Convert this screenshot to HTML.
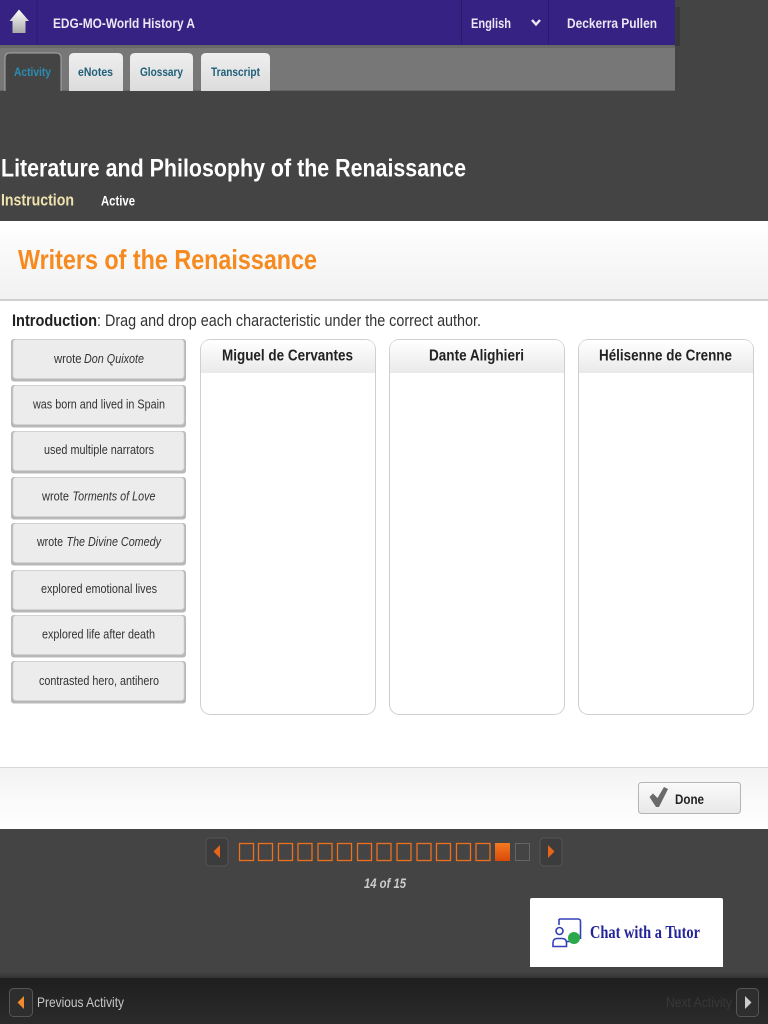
<!DOCTYPE html>
<html><head><meta charset="utf-8"><title>Writers of the Renaissance</title>
<style>
html,body{margin:0;padding:0;background:#444;width:768px;height:1024px;overflow:hidden}
svg{display:block;position:absolute;left:0;top:0;filter:blur(0.3px)}
text{font-family:"Liberation Sans",sans-serif}
.b{font-weight:700}
.i{font-style:italic}
.t{font-size:12.5px;fill:#333}
</style></head><body>
<svg width="768" height="1024" viewBox="0 0 768 1024" xmlns="http://www.w3.org/2000/svg">
<defs>
<linearGradient id="head" x1="0" y1="0" x2="0" y2="1"><stop offset="0" stop-color="#fff"/><stop offset="1" stop-color="#f1f1f1"/></linearGradient>
<linearGradient id="foot" x1="0" y1="0" x2="0" y2="1"><stop offset="0" stop-color="#f3f3f3"/><stop offset="1" stop-color="#fff"/></linearGradient>
<linearGradient id="col" x1="0" y1="0" x2="0" y2="1"><stop offset="0" stop-color="#fff"/><stop offset="1" stop-color="#e9e9e9"/></linearGradient>
<linearGradient id="tab" x1="0" y1="0" x2="0" y2="1"><stop offset="0" stop-color="#eee"/><stop offset="1" stop-color="#dcdcdc"/></linearGradient>
<linearGradient id="home" x1="0" y1="0" x2="0" y2="1"><stop offset="0" stop-color="#fff"/><stop offset="1" stop-color="#a9a9a9"/></linearGradient>
<linearGradient id="sq" x1="0" y1="0" x2="0" y2="1"><stop offset="0" stop-color="#f47a20"/><stop offset="1" stop-color="#d94a08"/></linearGradient>
<linearGradient id="done" x1="0" y1="0" x2="0" y2="1"><stop offset="0" stop-color="#fafafa"/><stop offset="1" stop-color="#e8e8e8"/></linearGradient>
<linearGradient id="bar" x1="0" y1="0" x2="0" y2="1"><stop offset="0" stop-color="#1f1f1f"/><stop offset="1" stop-color="#2b2b2b"/></linearGradient>
<linearGradient id="shade" x1="0" y1="0" x2="0" y2="1"><stop offset="0" stop-color="#444"/><stop offset="1" stop-color="#333"/></linearGradient>
</defs>

<rect width="768" height="1024" fill="#444"/>

<!-- top bar -->
<rect x="675" y="7" width="5" height="39" fill="#383838"/>
<rect x="0" y="45" width="675" height="46" fill="#777"/>
<rect x="0" y="45" width="675" height="3" fill="#686868"/>
<rect x="0" y="90" width="675" height="1" fill="#666"/>
<rect x="0" y="0" width="675" height="45" fill="#352283"/>
<rect x="36.500" y="0" width="1" height="45" fill="#2a1a6c"/>
<rect x="461" y="0" width="1" height="45" fill="#2a1a6c"/>
<rect x="548" y="0" width="1" height="45" fill="#2a1a6c"/>
<path d="M19 9.500 L29 21 H25.500 V33 H12.500 V21 H9.500 Z" fill="url(#home)"/>
<text x="53" y="28" class="b" font-size="13.500" fill="#ebe8f5" textLength="142" lengthAdjust="spacingAndGlyphs">EDG-MO-World History A</text>
<text x="471" y="28" class="b" font-size="13.500" fill="#ebe8f5" textLength="40" lengthAdjust="spacingAndGlyphs">English</text>
<path d="M532 20 L536 24.500 L540 20" fill="none" stroke="#ebe8f5" stroke-width="2.400"/>
<text x="567" y="28" class="b" font-size="13.500" fill="#ebe8f5" textLength="90" lengthAdjust="spacingAndGlyphs">Deckerra Pullen</text>

<!-- tabs -->
<path d="M5 91 V58 Q5 53 10 53 H56 Q61 53 61 58 V91 Z" fill="#444"/>
<path d="M5 91 V58 Q5 53 10 53 H56 Q61 53 61 58 V91" fill="none" stroke="#a8a8a8" stroke-width="1"/>
<path d="M69 91 V58 Q69 53 74 53 H118 Q123 53 123 58 V91 Z" fill="url(#tab)"/>
<path d="M130 91 V58 Q130 53 135 53 H188 Q193 53 193 58 V91 Z" fill="url(#tab)"/>
<path d="M201 91 V58 Q201 53 206 53 H265 Q270 53 270 58 V91 Z" fill="url(#tab)"/>
<rect x="5" y="91" width="56" height="1" fill="#444"/>
<text x="14" y="76" class="b" font-size="12" fill="#2b8db3" textLength="37" lengthAdjust="spacingAndGlyphs">Activity</text>
<text x="78" y="76" class="b" font-size="12" fill="#1f5f78" textLength="35" lengthAdjust="spacingAndGlyphs">eNotes</text>
<text x="140" y="76" class="b" font-size="12" fill="#1f5f78" textLength="43" lengthAdjust="spacingAndGlyphs">Glossary</text>
<text x="211" y="76" class="b" font-size="12" fill="#1f5f78" textLength="49" lengthAdjust="spacingAndGlyphs">Transcript</text>

<!-- titles -->
<text x="1" y="176.500" class="b" font-size="25" fill="#fff" textLength="465" lengthAdjust="spacingAndGlyphs">Literature and Philosophy of the Renaissance</text>
<text x="1" y="205.500" class="b" font-size="16.500" fill="#efe2ad" textLength="73" lengthAdjust="spacingAndGlyphs">Instruction</text>
<text x="101" y="205.500" class="b" font-size="13.500" fill="#fff" textLength="34" lengthAdjust="spacingAndGlyphs">Active</text>

<!-- content -->
<rect x="0" y="221" width="768" height="608" fill="#fff"/>
<rect x="0" y="221" width="768" height="78" fill="url(#head)"/>
<rect x="0" y="299" width="768" height="2" fill="#d0d0d0"/>
<text x="18" y="269" class="b" font-size="27.500" fill="#f68a1f" textLength="299" lengthAdjust="spacingAndGlyphs">Writers of the Renaissance</text>
<text x="12" y="326" class="b" font-size="16.500" fill="#222" textLength="85" lengthAdjust="spacingAndGlyphs">Introduction</text>
<text x="97" y="326" font-size="16.500" fill="#333" textLength="384" lengthAdjust="spacingAndGlyphs">: Drag and drop each characteristic under the correct author.</text>

<!-- tiles -->
<g fill="#b8b8b8">
<rect x="11" y="339" width="175" height="42.500" rx="3"/><rect x="11" y="385" width="175" height="42.500" rx="3"/>
<rect x="11" y="431" width="175" height="42.500" rx="3"/><rect x="11" y="477" width="175" height="42.500" rx="3"/>
<rect x="11" y="523" width="175" height="42.500" rx="3"/><rect x="11" y="570" width="175" height="42.500" rx="3"/>
<rect x="11" y="615" width="175" height="42.500" rx="3"/><rect x="11" y="661" width="175" height="42.500" rx="3"/>
</g>
<g fill="#ececec" stroke="#d2d2d2" stroke-width="0.800">
<rect x="13" y="339.500" width="171" height="39" rx="3"/><rect x="13" y="385.500" width="171" height="39" rx="3"/>
<rect x="13" y="431.500" width="171" height="39" rx="3"/><rect x="13" y="477.500" width="171" height="39" rx="3"/>
<rect x="13" y="523.500" width="171" height="39" rx="3"/><rect x="13" y="570.500" width="171" height="39" rx="3"/>
<rect x="13" y="615.500" width="171" height="39" rx="3"/><rect x="13" y="661.500" width="171" height="39" rx="3"/>
</g>
<text x="54" y="363" class="t" textLength="27.500" lengthAdjust="spacingAndGlyphs">wrote</text>
<text x="84" y="363" class="t i" textLength="60" lengthAdjust="spacingAndGlyphs">Don Quixote</text>
<text x="33" y="408.500" class="t" textLength="132" lengthAdjust="spacingAndGlyphs">was born and lived in Spain</text>
<text x="44" y="454" class="t" textLength="110" lengthAdjust="spacingAndGlyphs">used multiple narrators</text>
<text x="42" y="500.500" class="t" textLength="27" lengthAdjust="spacingAndGlyphs">wrote</text>
<text x="72.500" y="500.500" class="t i" textLength="83" lengthAdjust="spacingAndGlyphs">Torments of Love</text>
<text x="37" y="546" class="t" textLength="26" lengthAdjust="spacingAndGlyphs">wrote</text>
<text x="66.500" y="546" class="t i" textLength="94.500" lengthAdjust="spacingAndGlyphs">The Divine Comedy</text>
<text x="41" y="593" class="t" textLength="116" lengthAdjust="spacingAndGlyphs">explored emotional lives</text>
<text x="42" y="638.500" class="t" textLength="113" lengthAdjust="spacingAndGlyphs">explored life after death</text>
<text x="39" y="685" class="t" textLength="120" lengthAdjust="spacingAndGlyphs">contrasted hero, antihero</text>

<!-- columns -->
<rect x="200.500" y="339.500" width="175" height="375" rx="10" fill="#fff" stroke="#cfcfcf"/>
<path d="M201 373 V350 Q201 340 211 340 H365 Q375 340 375 350 V373 Z" fill="url(#col)"/>
<rect x="389.500" y="339.500" width="175" height="375" rx="10" fill="#fff" stroke="#cfcfcf"/>
<path d="M390 373 V350 Q390 340 400 340 H554 Q564 340 564 350 V373 Z" fill="url(#col)"/>
<rect x="578.500" y="339.500" width="175" height="375" rx="10" fill="#fff" stroke="#cfcfcf"/>
<path d="M579 373 V350 Q579 340 589 340 H743 Q753 340 753 350 V373 Z" fill="url(#col)"/>
<text x="222" y="360.500" class="b" font-size="15.500" fill="#222" textLength="131" lengthAdjust="spacingAndGlyphs">Miguel de Cervantes</text>
<text x="429" y="360.500" class="b" font-size="15.500" fill="#222" textLength="95" lengthAdjust="spacingAndGlyphs">Dante Alighieri</text>
<text x="599" y="360.500" class="b" font-size="15.500" fill="#222" textLength="133" lengthAdjust="spacingAndGlyphs">Hélisenne de Crenne</text>

<!-- footer of content -->
<rect x="0" y="767" width="768" height="62" fill="url(#foot)"/>
<rect x="0" y="767" width="768" height="1" fill="#d8d8d8"/>
<rect x="638.500" y="782.500" width="102" height="31" rx="3" fill="url(#done)" stroke="#b5b5b5"/>
<path d="M649.500 797 L653 793.500 L657.500 798 L664 787 L668 789 L659 807 L656 807 Z" fill="#6a6a6a"/>
<text x="675" y="804" class="b" font-size="14" fill="#222" textLength="29" lengthAdjust="spacingAndGlyphs">Done</text>

<!-- pager -->
<rect x="206" y="838" width="22" height="28" rx="4" fill="#3c3c3c" stroke="#555"/>
<path d="M220 845 V858 L213.500 851.500 Z" fill="#e8641a"/>
<rect x="540" y="838" width="22" height="28" rx="4" fill="#3c3c3c" stroke="#555"/>
<path d="M548 845 V858 L554.500 851.500 Z" fill="#e8641a"/>
<g fill="none" stroke="#ec701e" stroke-width="1.300">
<rect x="239.500" y="843.500" width="14" height="17"/><rect x="258.500" y="843.500" width="14" height="17"/>
<rect x="278.500" y="843.500" width="14" height="17"/><rect x="298" y="843.500" width="14" height="17"/>
<rect x="318" y="843.500" width="14" height="17"/><rect x="337.500" y="843.500" width="14" height="17"/>
<rect x="357.500" y="843.500" width="14" height="17"/><rect x="377" y="843.500" width="14" height="17"/>
<rect x="397" y="843.500" width="14" height="17"/><rect x="417" y="843.500" width="14" height="17"/>
<rect x="436.500" y="843.500" width="14" height="17"/><rect x="456.500" y="843.500" width="14" height="17"/>
<rect x="476" y="843.500" width="14" height="17"/>
</g>
<rect x="495" y="843" width="15" height="18" fill="url(#sq)"/>
<rect x="515.500" y="843.500" width="14" height="17" fill="none" stroke="#666"/>
<text x="364" y="888" class="i b" font-size="14" fill="#ccc" textLength="42" lengthAdjust="spacingAndGlyphs">14 of 15</text>

<!-- bottom bar -->
<rect x="0" y="972" width="768" height="6" fill="url(#shade)"/>
<rect x="0" y="978" width="768" height="46" fill="url(#bar)"/>
<rect x="9.500" y="988.500" width="23" height="28" rx="4" fill="#2e2e2e" stroke="#555"/>
<path d="M24 996 V1009 L17.500 1002.500 Z" fill="#f08a2c"/>
<text x="37" y="1007" font-size="14" fill="#c8c8c8" textLength="87" lengthAdjust="spacingAndGlyphs">Previous Activity</text>
<text x="666" y="1007" font-size="14" fill="#383838" textLength="66" lengthAdjust="spacingAndGlyphs">Next Activity</text>
<rect x="736.500" y="988.500" width="22" height="28" rx="4" fill="#2e2e2e" stroke="#555"/>
<path d="M745 996 V1009 L751.500 1002.500 Z" fill="#ccc"/>

<!-- chat -->
<path d="M530 900 Q530 898 532 898 H721 Q723 898 723 900 V967 H530 Z" fill="#fff"/>
<g fill="none" stroke="#3340b5" stroke-width="1.600">
<path d="M559 919 H578 Q580.500 919 580.500 921.500 V939"/>
<path d="M559 919 V925"/>
<path d="M566 941.500 H571"/>
<circle cx="559.500" cy="931" r="3.500"/>
<path d="M553 946.500 V943 Q553 938.500 557 938.500 H562 Q566.500 938.500 566.500 943 V946.500 Z"/>
</g>
<circle cx="574" cy="938" r="6" fill="#2ba84a"/>
<text x="590" y="938" style="font-family:'Liberation Serif',serif" font-weight="700" font-size="18" fill="#23239a" textLength="110" lengthAdjust="spacingAndGlyphs">Chat with a Tutor</text>
</svg>
</body></html>
